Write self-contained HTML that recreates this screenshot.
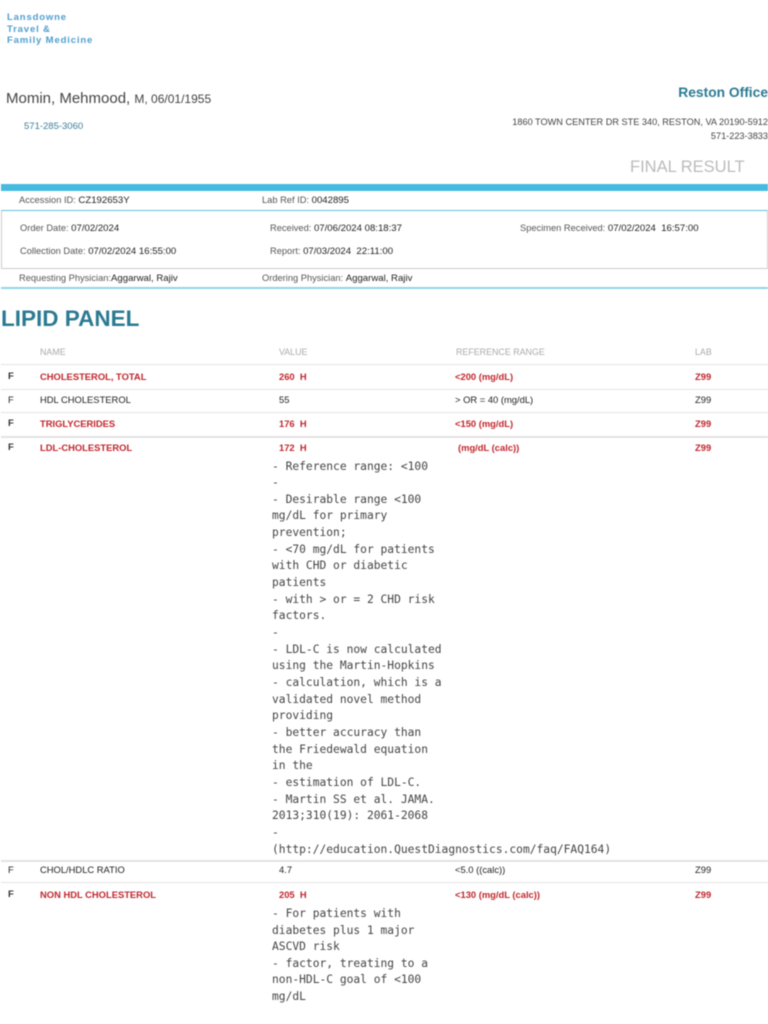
<!DOCTYPE html>
<html><head><meta charset="utf-8">
<style>
html,body{margin:0;padding:0;background:#fff}
#p{position:relative;width:768px;height:1024px;overflow:hidden;font-family:"Liberation Sans",sans-serif;color:#333;filter:blur(.45px)}
#p div{position:absolute;white-space:pre;line-height:14px}
.l{font-size:9.3px;color:#555}
.v{color:#222}
.s{font-size:9.6px}
.h{font-size:8.9px;color:#aaa}
.r{font-size:9.4px;font-weight:bold;color:#c0262d}
.b{font-size:9.4px;color:#222}
.f{font-size:9.5px;font-weight:bold;color:#333}
.hr{height:1px;background:#e3e3e3;left:1px;right:0}
.m{font-family:"DejaVu Sans Mono",monospace;font-size:11.27px;color:#444;left:272px}
</style></head><body><div id="p">
<div style="left:7px;top:12.3px;font-size:9.5px;line-height:11.5px;color:#3d94c8;letter-spacing:.85px;font-weight:bold;opacity:.9">Lansdowne
Travel &amp;
Family Medicine</div>

<div style="left:6px;top:92px;font-size:15px;color:#444">Momin, Mehmood, <span style="font-size:12px">M, 06/01/1955</span></div>
<div style="left:24px;top:120px;font-size:9.5px;color:#3a7f9b">571-285-3060</div>

<div style="right:0;top:86px;font-size:13.8px;font-weight:bold;color:#2b7a92">Reston Office</div>
<div style="right:0;top:114.7px;font-size:9.18px;color:#444">1860 TOWN CENTER DR STE 340, RESTON, VA 20190-5912</div>
<div style="right:0;top:129px;font-size:9.18px;color:#444">571-223-3833</div>
<div style="left:630px;top:159.7px;font-size:16.5px;color:#bbb">FINAL RESULT</div>

<div style="left:1px;right:0;top:184px;height:7px;background:#47bbdf"></div>
<div class="l" style="left:19px;top:193.4px">Accession ID: <span class="v s">CZ192653Y</span></div>
<div class="l" style="left:262px;top:193.4px">Lab Ref ID: <span class="v s">0042895</span></div>

<div style="left:1px;right:0;top:210px;height:57px;border-top:1px solid #5cc3e2;border-right:1px solid #ccc;border-left:1px solid #ccc;border-bottom:1px solid #ccc"></div>
<div class="l" style="left:20px;top:221px">Order Date: <span class="v s">07/02/2024</span></div>
<div class="l" style="left:270px;top:221px">Received: <span class="v s">07/06/2024 08:18:37</span></div>
<div class="l" style="left:520px;top:221px">Specimen Received: <span class="v s">07/02/2024  16:57:00</span></div>
<div class="l" style="left:20px;top:244px">Collection Date: <span class="v s">07/02/2024 16:55:00</span></div>
<div class="l" style="left:270px;top:244px">Report: <span class="v s">07/03/2024  22:11:00</span></div>
<div class="l" style="left:19px;top:270.7px">Requesting Physician:<span class="v s">Aggarwal, Rajiv</span></div>
<div class="l" style="left:262px;top:270.7px">Ordering Physician: <span class="v s">Aggarwal, Rajiv</span></div>
<div style="left:1px;right:0;top:287px;height:2px;background:#8fd6ec"></div>

<div style="left:1px;top:305px;font-size:22.5px;line-height:28px;font-weight:bold;color:#2b7a92">LIPID PANEL</div>

<div class="h" style="left:40px;top:345.3px">NAME</div>
<div class="h" style="left:279px;top:345.3px">VALUE</div>
<div class="h" style="left:456px;top:345.3px">REFERENCE RANGE</div>
<div class="h" style="left:695px;top:345.3px">LAB</div>
<div class="hr" style="top:364px"></div>

<div class="f" style="left:8px;top:370px">F</div>
<div class="r" style="left:40px;top:370px">CHOLESTEROL, TOTAL</div>
<div class="r" style="left:279px;top:370px">260 &nbsp;H</div>
<div class="r" style="left:455px;top:369.7px">&lt;200 (mg/dL)</div>
<div class="r" style="left:695px;top:369.7px">Z99</div>
<div class="hr" style="top:389px"></div>

<div class="b" style="left:8px;top:392.7px">F</div>
<div class="b" style="left:40px;top:392.7px">HDL CHOLESTEROL</div>
<div class="b" style="left:279px;top:392.7px">55</div>
<div class="b" style="left:455px;top:393px">&gt; OR = 40 (mg/dL)</div>
<div class="b" style="left:695px;top:393px">Z99</div>
<div class="hr" style="top:412px"></div>

<div class="f" style="left:8px;top:417px">F</div>
<div class="r" style="left:40px;top:417px">TRIGLYCERIDES</div>
<div class="r" style="left:279px;top:417.3px">176 &nbsp;H</div>
<div class="r" style="left:455px;top:417px">&lt;150 (mg/dL)</div>
<div class="r" style="left:695px;top:417px">Z99</div>
<div class="hr" style="top:436px;height:2px"></div>

<div class="f" style="left:8px;top:441px">F</div>
<div class="r" style="left:40px;top:441px">LDL-CHOLESTEROL</div>
<div class="r" style="left:279px;top:441px">172 &nbsp;H</div>
<div class="r" style="left:458px;top:441.3px">(mg/dL (calc))</div>
<div class="r" style="left:695px;top:441.3px">Z99</div>

<div class="m" style="top:458.5px;line-height:16.65px">- Reference range: &lt;100
-
- Desirable range &lt;100
mg/dL for primary
prevention;
- &lt;70 mg/dL for patients
with CHD or diabetic
patients
- with &gt; or = 2 CHD risk
factors.
-
- LDL-C is now calculated
using the Martin-Hopkins
- calculation, which is a
validated novel method
providing
- better accuracy than
the Friedewald equation
in the
- estimation of LDL-C.
- Martin SS et al. JAMA.
2013;310(19): 2061-2068
-
(http://education.QuestDiagnostics.com/faq/FAQ164)</div>
<div class="hr" style="top:860px;height:2px"></div>

<div class="b" style="left:8px;top:863.3px">F</div>
<div class="b" style="left:40px;top:863.3px">CHOL/HDLC RATIO</div>
<div class="b" style="left:279px;top:863.3px">4.7</div>
<div class="b" style="left:455px;top:863.3px">&lt;5.0 ((calc))</div>
<div class="b" style="left:695px;top:863.3px">Z99</div>
<div class="hr" style="top:882px"></div>

<div class="f" style="left:8px;top:888px">F</div>
<div class="r" style="left:40px;top:888px">NON HDL CHOLESTEROL</div>
<div class="r" style="left:279px;top:888px">205 &nbsp;H</div>
<div class="r" style="left:455px;top:887.7px">&lt;130 (mg/dL (calc))</div>
<div class="r" style="left:695px;top:887.7px">Z99</div>

<div class="m" style="top:906px;line-height:16.6px">- For patients with
diabetes plus 1 major
ASCVD risk
- factor, treating to a
non-HDL-C goal of &lt;100
mg/dL</div>
</div></body></html>
